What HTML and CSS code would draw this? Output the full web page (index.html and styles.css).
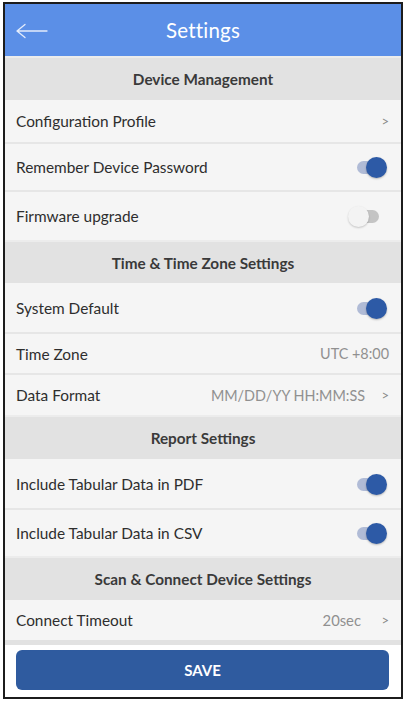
FILE: index.html
```html
<!DOCTYPE html>
<html>
<head>
<meta charset="utf-8">
<link rel="stylesheet" href="styles.css">
</head>
<body>
<div class="frame">
  <header class="topbar">
    <svg class="back" width="34" height="16" viewBox="0 0 34 16">
      <path d="M1 8 H31 M1 8 L9 1.5 M1 8 L9 14.5" stroke="#e4ecfb" stroke-width="1.3" fill="none" stroke-linecap="round"/>
    </svg>
    <h1 class="title">Settings</h1>
  </header>

  <div class="section s44">Device Management</div>
  <div class="row h42 first"><span class="label">Configuration Profile</span><span class="chev">&gt;</span></div>
  <div class="row h48"><span class="label">Remember Device Password</span><span class="toggle on"><i></i></span></div>
  <div class="row h50"><span class="label">Firmware upgrade</span><span class="toggle off"><i></i></span></div>

  <div class="section s43">Time &amp; Time Zone Settings</div>
  <div class="row h49 first"><span class="label">System Default</span><span class="toggle on"><i></i></span></div>
  <div class="row h41"><span class="label">Time Zone</span><span class="value">UTC +8:00</span></div>
  <div class="row h42"><span class="label">Data Format</span><span class="value gap">MM/DD/YY HH:MM:SS</span><span class="chev">&gt;</span></div>

  <div class="section s44">Report Settings</div>
  <div class="row h49 first"><span class="label">Include Tabular Data in PDF</span><span class="toggle on"><i></i></span></div>
  <div class="row h48"><span class="label">Include Tabular Data in CSV</span><span class="toggle on"><i></i></span></div>

  <div class="section s44">Scan &amp; Connect Device Settings</div>
  <div class="row h40 first"><span class="label">Connect Timeout</span><span class="value gap wide">20sec</span><span class="chev">&gt;</span></div>
  <div class="strip"></div>

  <div class="footer">
    <button class="save">SAVE</button>
  </div>
</div>
</body>
</html>
```

FILE: styles.css
```css
* { box-sizing: border-box; }
html, body { margin: 0; padding: 0; background: #ffffff; }
body {
  font-family: Lato, "Open Sans", "Liberation Sans", sans-serif;
  color: #333;
}
.frame {
  margin: 2px 3px 3px 3px;
  width: 400px;
  height: 697px;
  border: 2px solid #1c1c1c;
  background: #f4f4f4;
  display: flex;
  flex-direction: column;
}
.topbar {
  height: 52px;
  flex: none;
  background: #5b8fe7;
  display: flex;
  align-items: center;
  justify-content: center;
  position: relative;
}
.back {
  position: absolute;
  left: 11px;
  top: 19px;
}
.title {
  margin: 0;
  font-size: 20.5px;
  font-weight: 400;
  color: #ffffff;
  letter-spacing: 0.2px;
}
.section {
  flex: none;
  background: #e2e2e2;
  display: flex;
  align-items: center;
  justify-content: center;
  font-size: 15.3px;
  font-weight: 700;
  color: #3a3a3a;
  border-top: 2px solid #ececec;
}
.s43 { height: 43px; }
.s44 { height: 44px; }
.row {
  flex: none;
  display: flex;
  align-items: center;
  padding: 0 12px 0 11px;
  background: #f5f5f5;
  border-top: 2px solid #e6e6e6;
  font-size: 15.4px;
}
.row.first { border-top: none; }
.h40 { height: 40px; }
.h41 { height: 41px; }
.h42 { height: 42px; }
.h48 { height: 48px; }
.h49 { height: 49px; }
.h50 { height: 50px; }
.label {
  flex: 1;
  color: #2e2e2e;
}
.value {
  color: #909090;
  font-size: 14.4px;
}
.value.gap { margin-right: 4px; }
.value.gap.wide { margin-right: 8px; font-size: 14.8px; }
.chev {
  color: #8a8a8a;
  font-size: 13px;
  width: 20px;
  text-align: right;
}
.toggle {
  position: relative;
  width: 34px;
  height: 20px;
  margin-right: 2px;
}
.toggle::before {
  content: "";
  position: absolute;
  left: 4px;
  right: 6px;
  top: 4px;
  height: 13px;
  border-radius: 7px;
  background: #b0bbd6;
}
.toggle i {
  position: absolute;
  top: 0;
  width: 21px;
  height: 21px;
  border-radius: 50%;
}
.toggle.on i {
  right: 0;
  background: #2d5aa6;
  box-shadow: 0 1px 2px rgba(0,0,0,0.25);
}
.toggle.off::before {
  background: #c4c4c4;
  left: 3px;
  right: 8px;
}
.toggle.off i {
  left: -5px;
  background: #f3f3f3;
  box-shadow: 0 1px 2px rgba(0,0,0,0.2);
}
.strip {
  height: 5px;
  flex: none;
  background: #e2e2e2;
}
.footer {
  flex: 1;
  background: #ffffff;
  padding: 5px 12px 0 11px;
}
.save {
  width: 100%;
  height: 40px;
  border: none;
  border-radius: 6px;
  background: #2f5b9f;
  color: #ffffff;
  font-family: Lato, "Open Sans", sans-serif;
  font-size: 15px;
  font-weight: 700;
}
```
